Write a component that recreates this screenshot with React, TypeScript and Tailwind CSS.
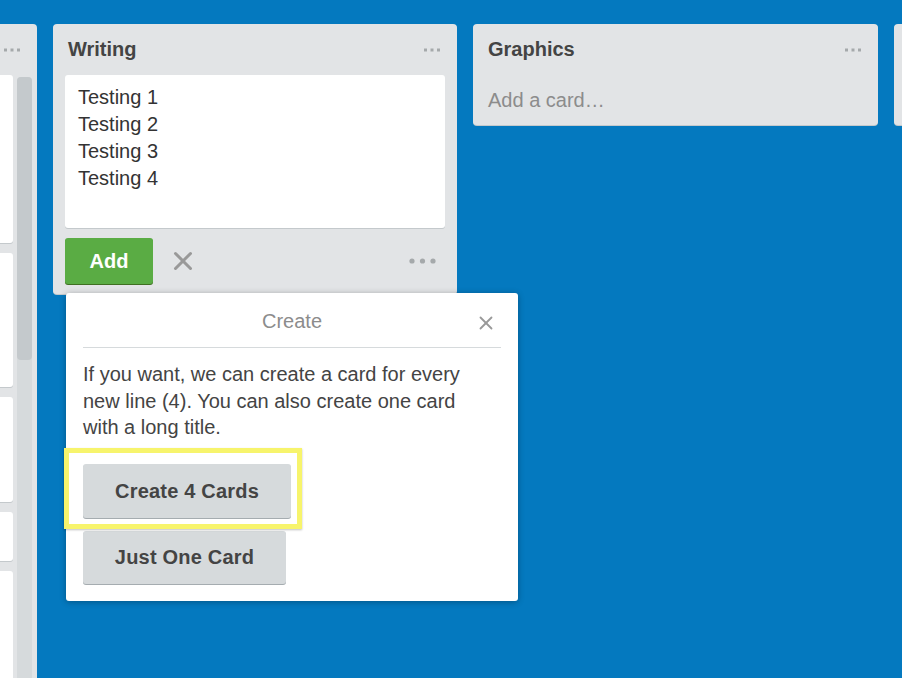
import { X } from "lucide-react";

const font = { fontFamily: '"Liberation Sans", Arial, sans-serif' };

function SmallDots() {
  return (
    <svg width="16" height="4" viewBox="0 0 16 4" className="text-[#a5a9ab]">
      <rect x="0" y="0.5" width="3" height="3" fill="currentColor" />
      <rect x="6.5" y="0.5" width="3" height="3" fill="currentColor" />
      <rect x="13" y="0.5" width="3" height="3" fill="currentColor" />
    </svg>
  );
}

function BigDots() {
  return (
    <svg width="27" height="6" viewBox="0 0 27 6" className="text-[#a5a9ab]">
      <circle cx="3" cy="3" r="2.6" fill="currentColor" />
      <circle cx="13.5" cy="3" r="2.6" fill="currentColor" />
      <circle cx="24" cy="3" r="2.6" fill="currentColor" />
    </svg>
  );
}

function ListHeader({ title }: { title?: string }) {
  return (
    <div className="shrink-0 flex items-center justify-between pl-[15px] pr-[17px] pt-[12px] h-[39px]">
      <h2 className="text-[20px] leading-[27px] font-bold text-[#444]">{title}</h2>
      <SmallDots />
    </div>
  );
}

export default function App() {
  const leftCards = [168, 134, 105, 49, 260];

  return (
    <div className="w-[902px] h-[678px] bg-[#0479bf] overflow-hidden relative" style={font}>
      <div className="flex gap-[16px] pt-[24px] items-start">
        {/* Left list, scrolled off screen */}
        <div className="w-[405px] ml-[-368px] shrink-0 h-[700px] overflow-hidden bg-[#e2e4e6] rounded-[4px] flex flex-col">
          <ListHeader />
          <div className="flex flex-1 mt-[12px] pr-[5px]">
            <div className="flex-1 flex flex-col gap-[10px] pr-[4px]">
              {leftCards.map((h, i) => (
                <div
                  key={i}
                  className="shrink-0 bg-white rounded-[3px] shadow-[0_1px_0_#c4c9cc]"
                  style={{ height: h }}
                />
              ))}
            </div>
            <div className="w-[15px] mt-[2px] bg-[#d6dadc] rounded-t-[4px] flex flex-col">
              <div className="h-[283px] bg-[#c4c9cc] rounded-[4px]" />
            </div>
          </div>
        </div>

        {/* Writing list */}
        <div className="w-[404px] shrink-0 bg-[#e2e4e6] rounded-[4px] shadow-[0_1px_0_#c4c9cc] px-[12px] pb-[10px]">
          <div className="-mx-[12px]">
            <ListHeader title="Writing" />
          </div>
          <div className="mt-[12px] h-[153px] bg-white rounded-[3px] shadow-[0_1px_0_#c4c9cc] px-[13px] pt-[9px] text-[20px] leading-[27px] text-[#333]">
            <div>Testing 1</div>
            <div>Testing 2</div>
            <div>Testing 3</div>
            <div>Testing 4</div>
          </div>
          <div className="flex items-center mt-[10px]">
            <button className="w-[88px] h-[46px] rounded-[3px] bg-[#5aac44] shadow-[0_1px_0_#3f6f21] text-white font-bold text-[20px]">
              Add
            </button>
            <X className="ml-[15px] w-[30px] h-[30px] text-[#999]" strokeWidth={2.4} />
            <div className="flex-1" />
            <div className="mr-[9px]">
              <BigDots />
            </div>
          </div>
        </div>

        {/* Graphics list */}
        <div className="w-[405px] shrink-0 bg-[#e2e4e6] rounded-[4px] shadow-[0_1px_0_#c4c9cc] pb-[11px]">
          <ListHeader title="Graphics" />
          <div className="px-[15px] pt-[24px] text-[20px] leading-[27px] text-[#8c8c8c]">Add a card…</div>
        </div>

        {/* Next list edge */}
        <div className="w-[405px] shrink-0 h-[101px] bg-[#e2e4e6] rounded-[4px] shadow-[0_1px_0_#c4c9cc]" />
      </div>

      {/* Create popover */}
      <div className="absolute left-[66px] top-[293px] w-[452px] h-[308px] bg-white rounded-[3px] shadow-[0_1px_6px_rgba(0,0,0,0.3)]">
        <div className="relative h-[55px] pt-[15px] mx-[17px] border-b border-[#d6dadc] text-center">
          <span className="text-[20px] leading-[27px] text-[#8c8c8c]">Create</span>
          <X className="absolute right-[4px] top-[19px] w-[22px] h-[22px] text-[#999]" strokeWidth={2} />
        </div>
        <div className="px-[17px] pt-[13px]">
          <p className="text-[20px] leading-[26.5px] text-[#444] pr-[20px]">
            If you want, we can create a card for every new line (4). You can also create one card with a long title.
          </p>
          <button className="mt-[23px] block w-[208px] h-[54px] rounded-[3px] bg-[#d6dadc] shadow-[0_1px_0_#a5acb0] text-[20px] font-bold text-[#444] tracking-[0.2px]">
            Create 4 Cards
          </button>
          <button className="mt-[13px] block w-[203px] h-[53px] rounded-[3px] bg-[#d6dadc] shadow-[0_1px_0_#a5acb0] text-[20px] font-bold text-[#444] tracking-[0.2px]">
            Just One Card
          </button>
        </div>
        {/* highlight frame */}
        <div className="absolute left-[-2px] top-[155px] w-[238px] h-[81px] border-[5px] border-[#f7f46c] shadow-[0_1px_2px_rgba(0,0,0,0.25)]" />
      </div>
    </div>
  );
}
